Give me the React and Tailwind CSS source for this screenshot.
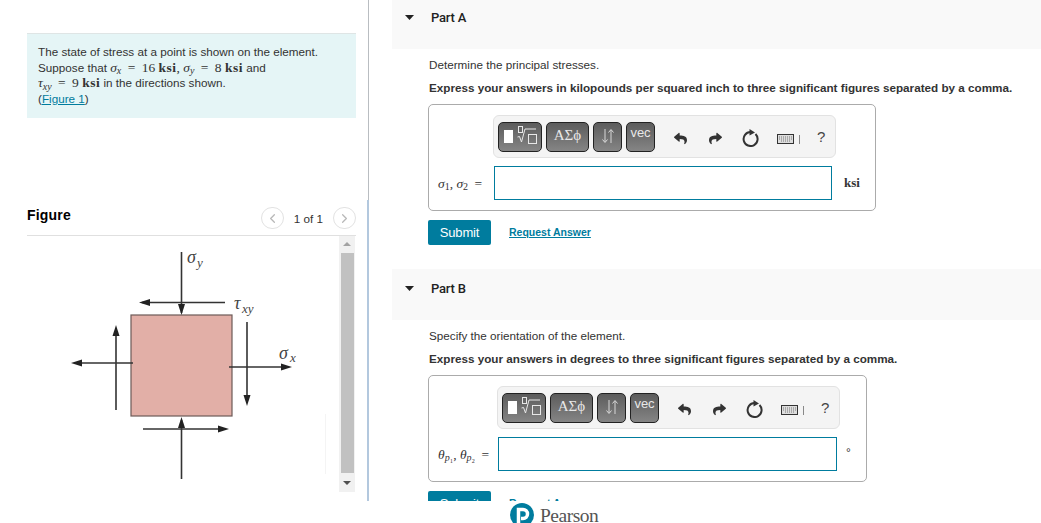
import React from 'react';
import { FaReply, FaShare } from 'react-icons/fa';
import { ChevronLeft, ChevronRight } from 'lucide-react';

const serif = "font-['Liberation_Serif',serif]";

// gray math palette buttons
const PaletteButton = ({ className, children }) => (
  <div className={`h-[30px] rounded-[5px] border border-[#222] bg-gradient-to-b from-[#5c5c5c] to-[#858585] text-[#e8e8e8] flex items-center justify-center ${className}`}>
    {children}
  </div>
);

const Keyboard = () => (
  <svg width="17" height="10" viewBox="0 0 17 10">
    <rect x="0.5" y="0.5" width="16" height="9" fill="#ddd" stroke="#333" />
    <path d="M2 3h13M2 5h13M4 7h9" stroke="#777" strokeWidth="1" strokeDasharray="1 1" />
  </svg>
);

const ResetIcon = () => (
  <svg width="18" height="18" viewBox="0 0 18 18" fill="none">
    <path d="M13.5 5A7 7 0 1 1 8.5 3" stroke="#333" strokeWidth="2" />
    <path d="M7.5 0L13 3.5L7.5 6.5z" fill="#333" />
  </svg>
);

const Toolbar = ({ className }) => (
  <div className={`h-[43px] w-[343px] rounded-[6px] border border-[#e2e2e2] bg-[#f4f4f4] flex items-center pl-[4px] ${className}`}>
    <PaletteButton className="w-[44px] relative">
      <span className="absolute left-[5px] top-[7px] w-[9px] h-[13px] bg-white" />
      <svg className="absolute left-0 top-0" width="42" height="28" viewBox="0 0 42 28" fill="none" stroke="#e8e8e8">
        <rect x="19.5" y="3.5" width="4" height="6" />
        <path d="M18.5 14l2-.5 2 5.5 3.5-13h11" />
        <rect x="29.5" y="11.5" width="8" height="9" />
      </svg>
    </PaletteButton>
    <PaletteButton className={`w-[43px] ml-[4px] text-[15px] pb-[3px] ${serif}`}>ΑΣϕ</PaletteButton>
    <PaletteButton className="w-[29px] ml-[4px] pb-[2px]">
      <svg width="14" height="16" viewBox="0 0 14 16" fill="none" stroke="#d8d8d8" strokeWidth="1">
        <path d="M4 1v13M1.5 11.5L4 14.5l2.500-3M10 15V2M7.500 4.500L10 1.500l2.500 3" />
      </svg>
    </PaletteButton>
    <PaletteButton className="w-[29px] ml-[4px] text-[13px] pb-[7px] font-['Liberation_Sans',sans-serif]">vec</PaletteButton>
    <FaReply className="ml-[19px] text-[#333] mt-[3px]" size={13} />
    <FaShare className="ml-[22px] text-[#333] mt-[3px]" size={13} />
    <span className="ml-[20px] mt-[3px]"><ResetIcon /></span>
    <span className="ml-[17px] mt-[5px]"><Keyboard /></span>
    <span className="ml-[5px] mt-[5px] w-px h-[9px] bg-[#888]" />
    <span className="ml-[17px] text-[15px] text-[#444] mt-[2px]">?</span>
  </div>
);

const AnswerBox = ({ boxClass, toolbarClass, labelClass, inputClass, label, unit, unitClass }) => (
  <div className={`border border-[#ababab] rounded-[5px] -ml-[1px] ${boxClass}`}>
    <Toolbar className={toolbarClass} />
    <div className="flex items-center mt-[8px]">
      <div className={`text-[13.5px] text-[#333] whitespace-nowrap mt-[2px] ${serif} ${labelClass}`}>{label}</div>
      <div className={`h-[34px] bg-white border border-[#007c9e] ${inputClass}`} />
      <div className={`${unitClass}`}>{unit}</div>
    </div>
  </div>
);

const PartHeader = ({ name, className, caretClass, nameClass }) => (
  <div className={`bg-[#f9f9f9] flex pl-[13px] ${className}`}>
    <svg className={caretClass} width="9" height="5" viewBox="0 0 9 5"><path d="M0 0h9L4.500 5z" fill="#222" /></svg>
    <span className={`ml-[17px] text-[13px] leading-[17px] text-[#222] font-['Roboto',sans-serif] font-medium tracking-[-0.2px] ${nameClass}`}>{name}</span>
  </div>
);

const SubmitRow = () => (
  <div className="flex items-center mt-[9px] -ml-[1px]">
    <button className="w-[63px] h-[25px] rounded-[2px] bg-[#007c9e] text-white text-[13px] font-medium tracking-[-0.2px]">Submit</button>
    <a className="ml-[18px] text-[10.5px] font-bold text-[#007c9e] underline">Request Answer</a>
  </div>
);

const Arrow = ({ d, head }) => (
  <g>
    <path d={d} stroke="#333" strokeWidth="1.6" fill="none" />
    <path d={head} fill="#222" />
  </g>
);

const Figure = () => (
  <svg width="312" height="256" viewBox="27 237 312 256">
    <rect x="131" y="316" width="101" height="101" fill="#e2afa7" stroke="#6d5a57" strokeWidth="1.2" />
    <Arrow d="M181.500 253V314" head="M181.500 316l-3.500-11h7z" />
    <Arrow d="M225 303.500H142" head="M139 303.500l11-3.500v7z" />
    <Arrow d="M247 323V404" head="M247 407l-3.500-11h7z" />
    <Arrow d="M229 368H289" head="M292 368l-11-3.500v7z" />
    <Arrow d="M116 411V329" head="M116 326l-3.500 11h7z" />
    <Arrow d="M133 364H74" head="M71 364l11-3.500v7z" />
    <Arrow d="M143 430H226" head="M229 430l-11-3.500v7z" />
    <Arrow d="M181.500 480V421" head="M181.500 418l-3.500 11h7z" />
    <g fill="#444" fontFamily="'Liberation Serif', serif" fontStyle="italic">
      <text x="187" y="264" fontSize="18">σ</text>
      <text x="197" y="268" fontSize="13">y</text>
      <text x="234" y="310" fontSize="18">τ</text>
      <text x="242" y="314" fontSize="13">xy</text>
      <text x="279" y="360" fontSize="18">σ</text>
      <text x="290" y="363" fontSize="13">x</text>
    </g>
    <path d="M325.500 415V475" stroke="#f4f4f4" />
  </svg>
);

const Scrollbar = () => (
  <div className="w-[16px] h-[256px] bg-[#f1f1f1] flex flex-col items-center">
    <svg className="mt-[6px]" width="8" height="4" viewBox="0 0 8 4"><path d="M4 0l4 4H0z" fill="#a3a3a3" /></svg>
    <div className="w-[13px] h-[220px] mt-[7px] bg-[#c1c1c1]" />
    <svg className="mt-[8px]" width="8" height="4" viewBox="0 0 8 4"><path d="M0 0h8L4 4z" fill="#505050" /></svg>
  </div>
);

const Sub = ({ children }) => <sub className="text-[10px]">{children}</sub>;
const Eq = () => <span className="mx-[3px]">=</span>;
const Ksi = () => <b className="tracking-[0.5px]">ksi</b>;

const LeftPane = () => (
  <div className="w-[367px] h-full shrink-0 pt-[33px] pl-[27px] pr-[11px] font-['Liberation_Sans',sans-serif]">
    <div className="h-[85px] bg-[#e5f5f6] border-t border-[#dfe5e5] pl-[11px] pt-[10px] text-[11.7px] leading-[15.5px] text-[#333]">
      <p className="h-[15.5px]">The state of stress at a point is shown on the element.</p>
      <p className="h-[15.5px]">
        Suppose that <span className={`${serif} text-[13.5px]`}><i>σ<Sub>x</Sub></i> <Eq /> 16 <Ksi />, <i>σ<Sub>y</Sub></i> <Eq /> 8 <Ksi /></span> and
      </p>
      <p className="h-[15.5px]"><span className={`${serif} text-[13.5px]`}><i>τ<Sub>xy</Sub></i> <Eq /> 9 <Ksi /></span> in the directions shown.</p>
      <p className="h-[15.5px]">(<a className="text-[#007c9e] underline">Figure 1</a>)</p>
    </div>
    <div className="h-[118px] pt-[89px] flex items-start border-b border-[#e0e0e0]">
      <span className="text-[14px] leading-[16px] font-bold text-black tracking-[0.2px]">Figure</span>
      <div className="ml-auto flex items-center text-[11.7px] text-[#333]">
        <span className="w-[23px] h-[22px] rounded-full border border-[#e2e2e2] flex items-center justify-center text-[#b8b8b8]"><ChevronLeft size={15} /></span>
        <span className="mx-[10px] mt-[1px]">1 of 1</span>
        <span className="w-[23px] h-[22px] rounded-full border border-[#e2e2e2] flex items-center justify-center text-[#b8b8b8]"><ChevronRight size={15} /></span>
      </div>
    </div>
    <div className="flex">
      <Figure />
      <Scrollbar />
    </div>
  </div>
);

// the pane divider is thin and gray at the top, thicker and blue below
const Divider = () => (
  <div className="w-[2px] shrink-0 h-full flex flex-col items-end">
    <div className="w-px h-[200px] bg-[#b9bdc1]" />
    <div className="w-[2px] flex-1 bg-[#b3c8de]" />
  </div>
);

const RightPane = () => (
  <div className="ml-[23px] flex-1 font-['Liberation_Sans',sans-serif] text-[11.7px] text-[#333]">
    <PartHeader name="Part A" className="h-[49px]" caretClass="mt-[15px]" nameClass="mt-[9px]" />
    <div className="pl-[37px]">
      <p className="mt-[8px] leading-[16px]">Determine the principal stresses.</p>
      <p className="mt-[7px] leading-[16px] font-bold">Express your answers in kilopounds per squared inch to three significant figures separated by a comma.</p>
      <AnswerBox
        boxClass="mt-[8px] w-[448px] h-[107px] pt-[10px]"
        toolbarClass="ml-[64px]"
        labelClass="w-[65px] pl-[9px]"
        inputClass="w-[338px]"
        label={<><i>σ</i><Sub>1</Sub>, <i>σ</i><Sub>2</Sub> <span className="ml-[3px]">=</span></>}
        unit="ksi"
        unitClass={`ml-[12px] text-[13px] font-bold ${serif}`}
      />
      <SubmitRow />
    </div>
    <PartHeader name="Part B" className="h-[51px] mt-[24px]" caretClass="mt-[17px]" nameClass="mt-[11px]" />
    <div className="pl-[37px]">
      <p className="mt-[8px] leading-[16px]">Specify the orientation of the element.</p>
      <p className="mt-[7px] leading-[16px] font-bold">Express your answers in degrees to three significant figures separated by a comma.</p>
      <AnswerBox
        boxClass="mt-[8px] w-[439px] h-[107px] pt-[10px]"
        toolbarClass="ml-[68px]"
        labelClass="w-[69px] pl-[9px]"
        inputClass="w-[339px]"
        label={<><i>θ</i><Sub><i>p</i>₁</Sub>, <i>θ</i><Sub><i>p</i>₂</Sub> <span className="ml-[3px]">=</span></>}
        unit="°"
        unitClass="ml-[9px] -mt-[3px] text-[12px]"
      />
      <SubmitRow />
    </div>
  </div>
);

export default function App() {
  return (
    <div className="w-[1041px] h-[523px] overflow-hidden bg-white">
      <div className="flex h-[501px] overflow-hidden">
        <LeftPane />
        <Divider />
        <RightPane />
      </div>
      <div className="flex items-start pl-[510px] pt-[2px]">
        <svg width="24" height="24" viewBox="0 0 24 24">
          <circle cx="12" cy="12" r="12" fill="#007c9e" />
          <path d="M8.500 20V6.500h4.500a4.500 4.500 0 0 1 0 9H11" stroke="#fff" strokeWidth="3.500" fill="none" />
        </svg>
        <span className={`ml-[6px] mt-[3px] text-[19.5px] leading-[19px] tracking-[-0.5px] text-[#555] ${serif}`}>Pearson</span>
      </div>
    </div>
  );
}
